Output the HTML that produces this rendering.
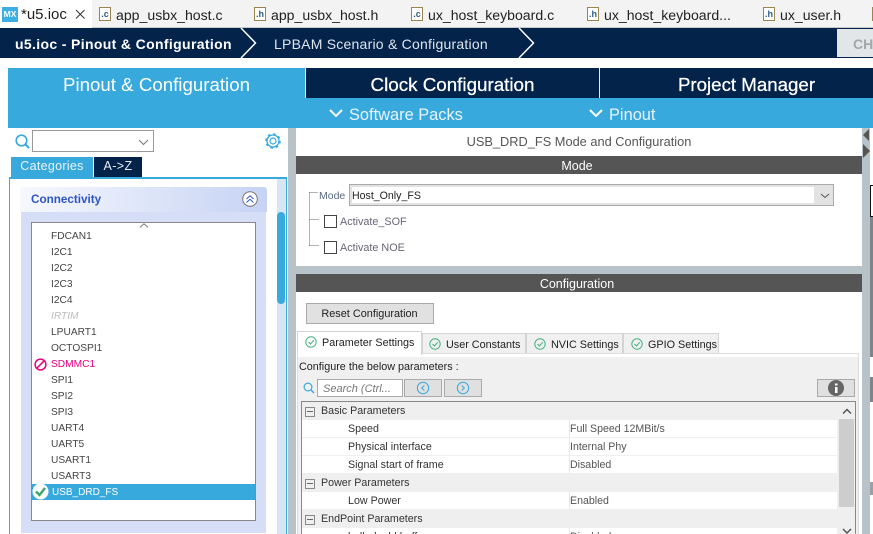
<!DOCTYPE html>
<html><head><meta charset="utf-8">
<style>
html,body{margin:0;padding:0;background:#fff}
#r{position:relative;width:873px;height:534px;overflow:hidden;background:#fff;font-family:"Liberation Sans",sans-serif;color:#333}
.b{position:absolute;box-sizing:border-box}
.t{position:absolute;white-space:nowrap;line-height:16px;height:16px}
.c{text-align:center}
svg{position:absolute;overflow:visible}
.fi{position:absolute;width:10px;height:12px;top:7px;border:1px solid #9a8450;background:#fff;font:bold 9px/12px "Liberation Sans",sans-serif;color:#2b5e8c;text-align:center;box-sizing:content-box}
.ft{font-size:14.1px;color:#222;top:7px}
.li{font-size:10.2px;left:51px;color:#444}
.pr{font-size:10.7px;color:#333}
.pv{font-size:10.6px;color:#555;left:570px}
.ph{position:absolute;left:302px;width:553px;height:18px;background:#efefef}
.pw{position:absolute;left:302px;width:535px;height:17px;background:#fff}
.vl{position:absolute;left:569px;width:1px;height:17px;background:#e8e8e8}
.mn{position:absolute;left:305px;width:10px;height:10px;border:1px solid #888;box-sizing:border-box}
.mn:after{content:"";position:absolute;left:1px;right:1px;top:3px;height:1px;background:#666}
.tab{position:absolute;background:#f0f0f0;border:1px solid #d4d4d4;border-bottom:none;box-sizing:border-box}
.tt{font-size:10.8px;color:#222}
</style></head><body><div id="r">

<!-- editor tabs -->
<div class="b" style="left:0;top:0;width:873px;height:28px;background:#f3f3f3;border-bottom:1px solid #c8c8c8"></div>
<div class="b" style="left:0;top:0;width:92px;height:28px;background:#fff"></div>
<div class="b" style="left:2px;top:7px;width:16px;height:15px;background:#3caee0;color:#fff;font:bold 8.5px/15px 'Liberation Sans',sans-serif;text-align:center">MX</div>
<div class="t ft" style="left:21px;font-size:15px">*u5.ioc</div>
<svg style="left:75px;top:9px" width="10" height="10"><path d="M1 1L9.500 9.500M9.500 1L1 9.500" stroke="#333" fill="none"/></svg>
<div class="fi" style="left:99px">.c</div><div class="t ft" style="left:116px">app_usbx_host.c</div>
<div class="fi" style="left:254px">.h</div><div class="t ft" style="left:271px">app_usbx_host.h</div>
<div class="fi" style="left:411px">.c</div><div class="t ft" style="left:428px">ux_host_keyboard.c</div>
<div class="fi" style="left:587px">.h</div><div class="t ft" style="left:604px">ux_host_keyboard...</div>
<div class="fi" style="left:763px">.h</div><div class="t ft" style="left:780px">ux_user.h</div>
<div class="b" style="left:872px;top:7px;width:1px;height:14px;background:#9a8450"></div>

<!-- nav bar -->
<div class="b" style="left:0;top:28px;width:873px;height:30px;background:#03234b"></div>
<div class="t" style="left:15px;top:36px;color:#fff;font-weight:bold;font-size:14px;letter-spacing:.35px">u5.ioc - Pinout &amp; Configuration</div>
<svg style="left:240px;top:28px" width="18" height="30"><path d="M1 0L15.500 15L1 30" stroke="#fff" stroke-width="1.500" fill="none"/></svg>
<div class="t" style="left:274px;top:36px;color:#dfe5ec;font-size:14px;letter-spacing:.23px">LPBAM Scenario &amp; Configuration</div>
<svg style="left:518px;top:28px" width="18" height="30"><path d="M1 0L15.500 15L1 30" stroke="#fff" stroke-width="1.500" fill="none"/></svg>
<div class="b" style="left:837px;top:29px;width:36px;height:28px;background:#e3e6e8"></div>
<div class="t" style="left:853px;top:36px;color:#a3a6a9;font-weight:bold;font-size:14px">CH</div>

<!-- main header -->
<div class="b" style="left:8px;top:68px;width:865px;height:60px;background:#38a9dc"></div>
<div class="b" style="left:305px;top:68px;width:568px;height:30px;background:#03234b"></div>
<div class="b" style="left:305px;top:68px;width:1px;height:30px;background:#e6eef5"></div>
<div class="b" style="left:599px;top:68px;width:1px;height:30px;background:#e6eef5"></div>
<div class="t c" style="left:8px;top:77px;width:297px;color:#fff;font-size:18.7px">Pinout &amp; Configuration</div>
<div class="t c" style="left:306px;top:77px;width:293px;color:#fff;font-size:18.8px;-webkit-text-stroke:.25px #fff">Clock Configuration</div>
<div class="t c" style="left:600px;top:77px;width:293px;color:#fff;font-size:18.7px;-webkit-text-stroke:.25px #fff">Project Manager</div>
<svg style="left:329px;top:109px" width="14" height="9"><path d="M1 1L7 7L13 1" stroke="#fff" stroke-width="2" fill="none"/></svg>
<div class="t" style="left:349px;top:107px;color:#e8f4fb;font-size:16.4px">Software Packs</div>
<svg style="left:589px;top:109px" width="14" height="9"><path d="M1 1L7 7L13 1" stroke="#fff" stroke-width="2" fill="none"/></svg>
<div class="t" style="left:609px;top:107px;color:#e8f4fb;font-size:16.4px">Pinout</div>

<!-- dividers -->
<div class="b" style="left:288px;top:128px;width:8px;height:406px;background:#b7c3c9"></div>
<div class="b" style="left:862px;top:128px;width:8px;height:406px;background:#b7c3c9"></div>
<svg style="left:862px;top:128px" width="11" height="40"><path d="M7 1V13L1 7Z" fill="#545554"/><path d="M1 16V30L8 23Z" fill="#545554"/></svg>
<div class="b" style="left:870px;top:185px;width:3px;height:32px;background:#fff;border:1px solid #111;border-right:none"></div>
<div class="b" style="left:870px;top:217px;width:3px;height:140px;background:#7e868b"></div>
<div class="b" style="left:870px;top:377px;width:3px;height:25px;background:#7e868b"></div>
<div class="b" style="left:870px;top:482px;width:3px;height:13px;background:#9aa0a4"></div>

<!-- left top -->
<svg style="left:15px;top:134px" width="15" height="16"><circle cx="6.500" cy="6.500" r="5.300" stroke="#38a9dc" stroke-width="1.600" fill="none"/><path d="M10.500 10.500L14 14" stroke="#38a9dc" stroke-width="2"/></svg>
<div class="b" style="left:32px;top:130px;width:122px;height:22px;border:1px solid #999;background:#fff"></div>
<svg style="left:138px;top:139px" width="11" height="7"><path d="M1 1L5.500 5.500L10 1" stroke="#777" fill="none"/></svg>
<svg style="left:265px;top:133px" width="16" height="16" viewBox="0 0 16 16"><circle cx="8" cy="8" r="3" stroke="#38a9dc" stroke-width="1.200" fill="none"/><circle cx="8" cy="8" r="6" stroke="#38a9dc" stroke-width="1.300" fill="none"/><circle cx="8" cy="8" r="7" stroke="#38a9dc" stroke-width="1.600" stroke-dasharray="2.500 3" fill="none"/></svg>
<div class="b" style="left:11px;top:157px;width:82px;height:21px;background:#38a9dc"></div>
<div class="t c" style="left:11px;top:158px;width:82px;color:#e8f5fb;font-size:12.500px;letter-spacing:.3px">Categories</div>
<div class="b" style="left:94px;top:157px;width:48px;height:20px;background:#03234b"></div>
<div class="t c" style="left:94px;top:158px;width:48px;color:#e8eef5;font-size:12.500px;letter-spacing:.4px">A-&gt;Z</div>
<div class="b" style="left:9px;top:177px;width:278px;height:357px;border:1px solid #38a9dc;border-top-width:2px;border-bottom:none;background:#fff"></div>
<div class="b" style="left:277px;top:179px;width:9px;height:355px;background:#d6e6f3"></div>
<div class="b" style="left:277px;top:212px;width:8px;height:92px;background:#38a9dc;border-radius:4px"></div>

<!-- connectivity -->
<div class="b" style="left:20px;top:187px;width:247px;height:25px;background:linear-gradient(90deg,#f6f8fd,#c6d3f4);border-radius:3px 3px 0 0"></div>
<div class="t" style="left:31px;top:192px;color:#2e55c4;font-size:11.7px;font-weight:bold">Connectivity</div>
<svg style="left:242px;top:191px" width="16" height="16"><circle cx="8" cy="8" r="7.300" fill="#fff" stroke="#777"/><path d="M4.500 8L8 4.800L11.500 8M4.500 11.500L8 8.300L11.500 11.500" stroke="#2e55c4" fill="none"/></svg>
<div class="b" style="left:21px;top:212px;width:245px;height:321px;background:#d5def6"></div>
<div class="b" style="left:31px;top:222px;width:225px;height:299px;background:#fff;border:1px solid #888"></div>
<svg style="left:139px;top:223px" width="10" height="5"><path d="M1 4.500L5 .8L9 4.500" stroke="#777" fill="none"/></svg>
<div class="t li" style="top:229px">FDCAN1</div>
<div class="t li" style="top:245px">I2C1</div>
<div class="t li" style="top:261px">I2C2</div>
<div class="t li" style="top:277px">I2C3</div>
<div class="t li" style="top:293px">I2C4</div>
<div class="t li" style="top:309px;color:#bcbcbc;font-style:italic">IRTIM</div>
<div class="t li" style="top:325px">LPUART1</div>
<div class="t li" style="top:341px">OCTOSPI1</div>
<svg style="left:34px;top:358px" width="13" height="13"><circle cx="6.500" cy="6.500" r="5.400" stroke="#e6007e" stroke-width="1.500" fill="none"/><path d="M2.800 10.200L10.200 2.800" stroke="#e6007e" stroke-width="1.500"/></svg>
<div class="t li" style="top:357px;color:#e6007e">SDMMC1</div>
<div class="t li" style="top:373px">SPI1</div>
<div class="t li" style="top:389px">SPI2</div>
<div class="t li" style="top:405px">SPI3</div>
<div class="t li" style="top:421px">UART4</div>
<div class="t li" style="top:437px">UART5</div>
<div class="t li" style="top:453px">USART1</div>
<div class="t li" style="top:469px">USART3</div>
<div class="b" style="left:32px;top:484px;width:223px;height:16px;background:#38a9dc"></div>
<svg style="left:32px;top:483px" width="17" height="17"><circle cx="8.500" cy="8.500" r="8" fill="#fff"/><path d="M4 8.500L7.500 12L13 5" stroke="#3aa66a" stroke-width="2.400" fill="none"/></svg>
<div class="t li" style="top:485px;left:52px;color:#fff;font-size:10px">USB_DRD_FS</div>

<!-- right panel -->
<div class="t c" style="left:296px;top:134px;width:566px;color:#555;font-size:12.8px">USB_DRD_FS Mode and Configuration</div>
<div class="b" style="left:296px;top:156px;width:566px;height:18px;background:#545554"></div>
<div class="t c" style="left:296px;top:158px;width:562px;color:#fff;font-size:12.500px">Mode</div>
<svg style="left:309px;top:187px" width="22" height="62"><path d="M.5 5.500V58.500M.5 5.500H9M.5 32.500H10M.5 58.500H10" stroke="#666" stroke-dasharray="1 1" fill="none" shape-rendering="crispEdges"/></svg>
<div class="t" style="left:319px;top:188px;color:#5a6a82;font-size:10.500px">Mode</div>
<div class="b" style="left:349px;top:184px;width:485px;height:22px;background:#e2e2e2;border:1px solid #aaa"></div>
<div class="b" style="left:352px;top:187px;width:462px;height:16px;background:#fff"></div>
<div class="t" style="left:352px;top:188px;color:#222;font-size:10.600px">Host_Only_FS</div>
<svg style="left:820px;top:193px" width="10" height="6"><path d="M1 1L5 4.500L9 1" stroke="#555" fill="none"/></svg>
<div class="b" style="left:324px;top:215px;width:13px;height:13px;border:1px solid #444;background:#fff"></div>
<div class="t" style="left:340px;top:214px;color:#667;font-size:10.800px">Activate_SOF</div>
<div class="b" style="left:324px;top:241px;width:13px;height:13px;border:1px solid #444;background:#fff"></div>
<div class="t" style="left:340px;top:240px;color:#667;font-size:10.800px">Activate NOE</div>
<div class="b" style="left:296px;top:266px;width:566px;height:8px;background:#b7c3c9"></div>
<div class="b" style="left:296px;top:274px;width:566px;height:18px;background:#545554"></div>
<div class="t c" style="left:296px;top:276px;width:562px;color:#fff;font-size:12.500px">Configuration</div>
<div class="b" style="left:306px;top:303px;width:128px;height:21px;background:#e1e1e1;border:1px solid #aaa"></div>
<div class="t c" style="left:306px;top:306px;width:127px;color:#222;font-size:10.900px">Reset Configuration</div>

<!-- config tabs -->
<div class="b" style="left:297px;top:353px;width:562px;height:181px;background:#fff;border:1px solid #ddd;border-bottom:none"></div>
<div class="b" style="left:298px;top:357px;width:560px;height:177px;background:#f0f0f0"></div>
<div class="tab" style="left:297px;top:331px;width:125px;height:24px;background:#fff"></div>
<div class="tab" style="left:422px;top:333px;width:104px;height:20px"></div>
<div class="tab" style="left:526px;top:333px;width:97px;height:20px"></div>
<div class="tab" style="left:623px;top:333px;width:96px;height:20px"></div>
<svg style="left:305px;top:336px" width="12" height="12"><circle cx="6" cy="6" r="5.200" stroke="#44b07a" fill="none"/><path d="M3.500 6L5.500 8L8.700 4.300" stroke="#44b07a" fill="none"/></svg>
<div class="t tt" style="left:322px;top:335px">Parameter Settings</div>
<svg style="left:429px;top:338px" width="12" height="12"><circle cx="6" cy="6" r="5.200" stroke="#44b07a" fill="none"/><path d="M3.500 6L5.500 8L8.700 4.300" stroke="#44b07a" fill="none"/></svg>
<div class="t tt" style="left:446px;top:337px">User Constants</div>
<svg style="left:534px;top:338px" width="12" height="12"><circle cx="6" cy="6" r="5.200" stroke="#44b07a" fill="none"/><path d="M3.500 6L5.500 8L8.700 4.300" stroke="#44b07a" fill="none"/></svg>
<div class="t tt" style="left:551px;top:337px">NVIC Settings</div>
<svg style="left:631px;top:338px" width="12" height="12"><circle cx="6" cy="6" r="5.200" stroke="#44b07a" fill="none"/><path d="M3.500 6L5.500 8L8.700 4.300" stroke="#44b07a" fill="none"/></svg>
<div class="t tt" style="left:648px;top:337px">GPIO Settings</div>

<div class="t tt" style="left:299px;top:359px">Configure the below parameters :</div>
<svg style="left:303px;top:382px" width="12" height="12"><circle cx="5" cy="5" r="3.900" stroke="#38a9dc" stroke-width="1.200" fill="none"/><path d="M8 8L11 11" stroke="#38a9dc" stroke-width="1.500"/></svg>
<div class="b" style="left:317px;top:379px;width:86px;height:18px;background:#fff;border:1px solid #aaa"></div>
<div class="t" style="left:323px;top:381px;color:#777;font-size:11px;font-style:italic">Search (Ctrl...</div>
<div class="b" style="left:404px;top:379px;width:38px;height:18px;background:#e0e0e0;border:1px solid #aaa"></div>
<svg style="left:416px;top:381px" width="14" height="14"><circle cx="7" cy="7" r="5.700" stroke="#38a9dc" fill="none"/><path d="M8.300 4.500L5.700 7L8.300 9.500" stroke="#38a9dc" fill="none"/></svg>
<div class="b" style="left:444px;top:379px;width:38px;height:18px;background:#e0e0e0;border:1px solid #aaa"></div>
<svg style="left:456px;top:381px" width="14" height="14"><circle cx="7" cy="7" r="5.700" stroke="#38a9dc" fill="none"/><path d="M5.700 4.500L8.300 7L5.700 9.500" stroke="#38a9dc" fill="none"/></svg>
<div class="b" style="left:817px;top:379px;width:38px;height:18px;background:#e0e0e0;border:1px solid #aaa"></div>
<svg style="left:828px;top:380px" width="16" height="16"><circle cx="8" cy="8" r="8" fill="#666"/><rect x="7" y="7" width="2.500" height="6" fill="#fff"/><rect x="7" y="3.500" width="2.500" height="2" fill="#fff"/></svg>

<!-- table -->
<div class="b" style="left:301px;top:401px;width:555px;height:133px;background:#efefef;border:1px solid #888;border-bottom:none"></div>
<div class="pw" style="top:420px"></div>
<div class="pw" style="top:438px"></div>
<div class="pw" style="top:456px"></div>
<div class="pw" style="top:492px"></div>
<div class="pw" style="top:528px;height:6px"></div>
<div class="vl" style="top:420px"></div>
<div class="vl" style="top:438px"></div>
<div class="vl" style="top:456px"></div>
<div class="vl" style="top:492px"></div>
<div class="vl" style="top:528px;height:6px"></div>
<div class="mn" style="top:407px"></div>
<div class="t pr" style="left:321px;top:403px">Basic Parameters</div>
<div class="t pr" style="left:348px;top:421px">Speed</div>
<div class="t pv" style="top:421px">Full Speed 12MBit/s</div>
<div class="t pr" style="left:348px;top:439px">Physical interface</div>
<div class="t pv" style="top:439px">Internal Phy</div>
<div class="t pr" style="left:348px;top:457px">Signal start of frame</div>
<div class="t pv" style="top:457px">Disabled</div>
<div class="mn" style="top:479px"></div>
<div class="t pr" style="left:321px;top:475px">Power Parameters</div>
<div class="t pr" style="left:348px;top:493px">Low Power</div>
<div class="t pv" style="top:493px">Enabled</div>
<div class="mn" style="top:515px"></div>
<div class="t pr" style="left:321px;top:511px">EndPoint Parameters</div>
<div class="t pr" style="left:348px;top:529px">bulk doubl buff</div>
<div class="t pv" style="top:529px">Disabled</div>
<svg style="left:842px;top:408px" width="10" height="7"><path d="M1 5.500L5 1.500L9 5.500" stroke="#555" stroke-width="1.500" fill="none"/></svg>
<div class="b" style="left:839px;top:419px;width:15px;height:88px;background:#cdcdcd"></div>
<svg style="left:842px;top:528px" width="10" height="6"><path d="M1 1L5 5L9 1" stroke="#555" stroke-width="1.500" fill="none"/></svg>

</div></body></html>
